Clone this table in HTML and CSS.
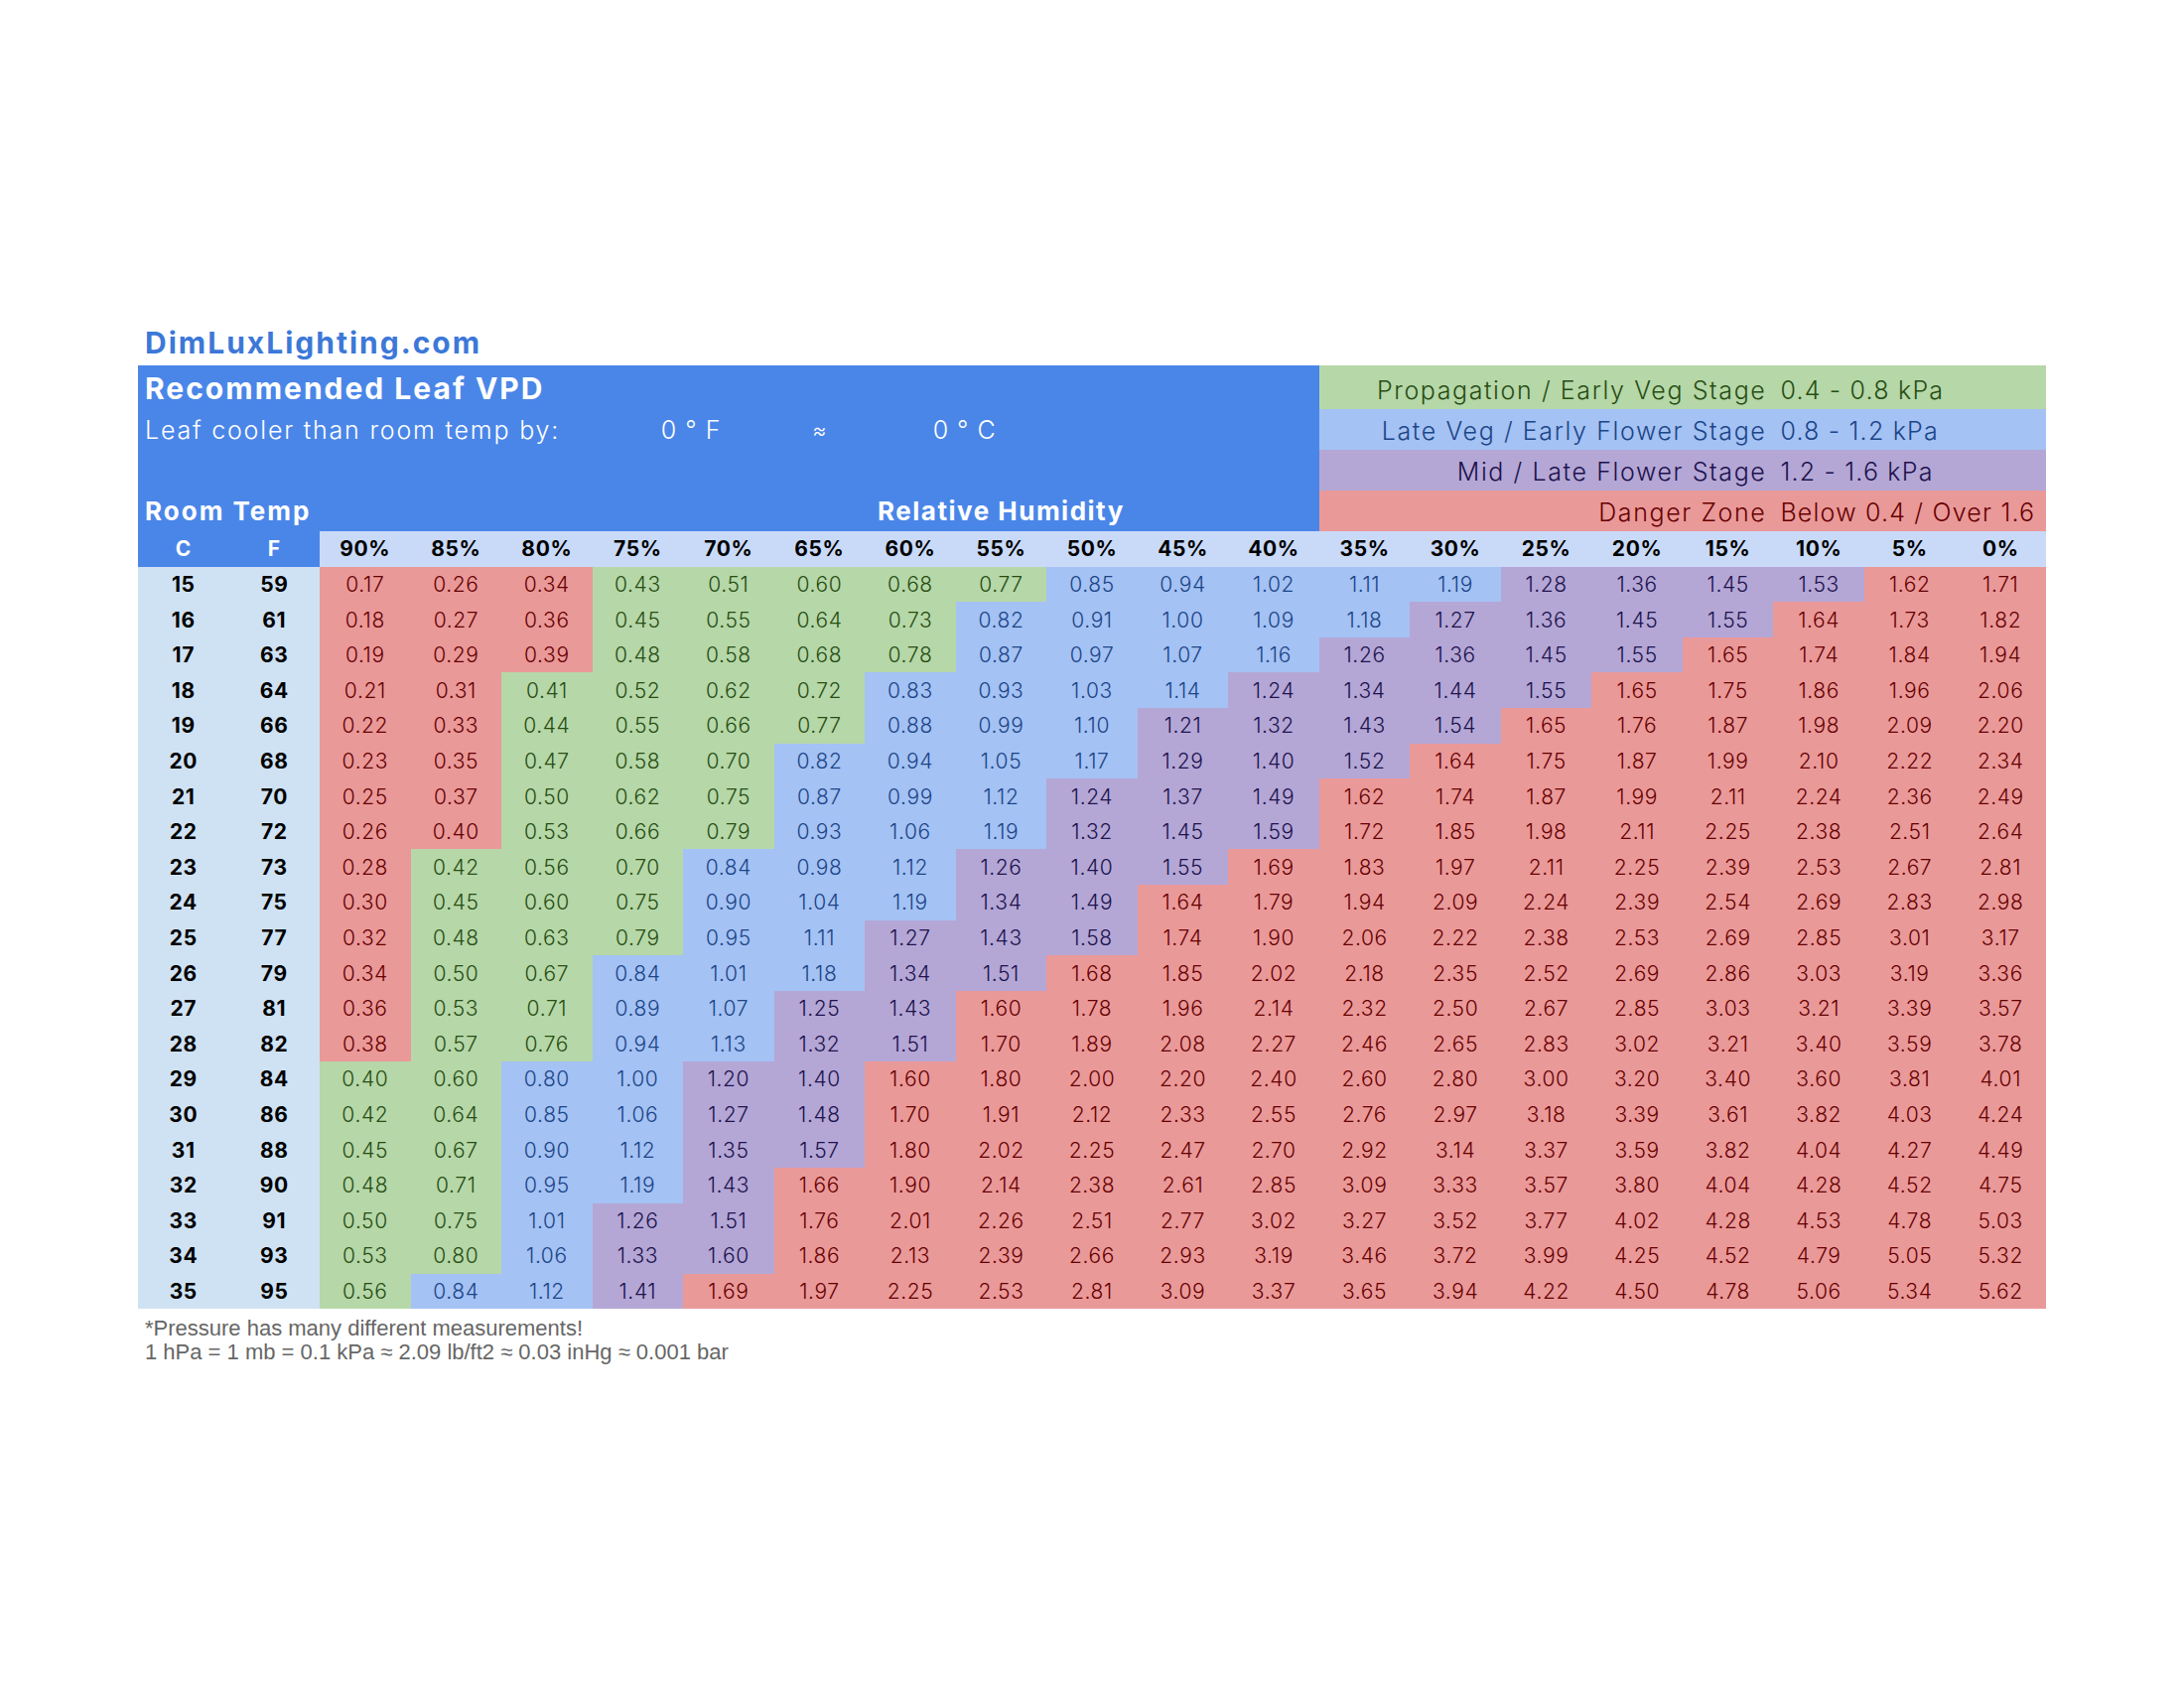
FILE: index.html
```html
<!DOCTYPE html>
<html lang="en">
<head>
<meta charset="utf-8">
<title>Recommended Leaf VPD</title>
<link rel="stylesheet" href="styles.css">
</head>
<body>
<div class="page">
  <div class="brand">DimLuxLighting.com</div>

  <div class="top">
    <div class="hblock">
      <div class="title">Recommended Leaf VPD</div>
      <div class="cool">Leaf cooler than room temp by:</div>
      <div class="degf">0 ° F</div>
      <div class="approx">≈</div>
      <div class="degc">0 ° C</div>
      <div class="roomtemp">Room Temp</div>
      <div class="rh">Relative Humidity</div>
    </div>
    <div class="lg lg-g"><span class="lg-name">Propagation / Early Veg Stage</span><span class="lg-val">0.4 - 0.8 kPa</span></div>
    <div class="lg lg-b"><span class="lg-name">Late Veg / Early Flower Stage</span><span class="lg-val">0.8 - 1.2 kPa</span></div>
    <div class="lg lg-p"><span class="lg-name">Mid / Late Flower Stage</span><span class="lg-val">1.2 - 1.6 kPa</span></div>
    <div class="lg lg-r"><span class="lg-name">Danger Zone</span><span class="lg-val">Below 0.4 / Over 1.6</span></div>
  </div>

  <div class="grid">
    <div class="hc">C</div><div class="hc">F</div>
    <div class="hp">90%</div><div class="hp">85%</div><div class="hp">80%</div><div class="hp">75%</div><div class="hp">70%</div><div class="hp">65%</div><div class="hp">60%</div><div class="hp">55%</div><div class="hp">50%</div><div class="hp">45%</div><div class="hp">40%</div><div class="hp">35%</div><div class="hp">30%</div><div class="hp">25%</div><div class="hp">20%</div><div class="hp">15%</div><div class="hp">10%</div><div class="hp">5%</div><div class="hp">0%</div>

    <div class="t">15</div><div class="t">59</div>
    <div>0.17</div><div>0.26</div><div>0.34</div><div class="g">0.43</div><div class="g">0.51</div><div class="g">0.60</div><div class="g">0.68</div><div class="g">0.77</div><div class="b">0.85</div><div class="b">0.94</div><div class="b">1.02</div><div class="b">1.11</div><div class="b">1.19</div><div class="p">1.28</div><div class="p">1.36</div><div class="p">1.45</div><div class="p">1.53</div><div>1.62</div><div>1.71</div>

    <div class="t">16</div><div class="t">61</div>
    <div>0.18</div><div>0.27</div><div>0.36</div><div class="g">0.45</div><div class="g">0.55</div><div class="g">0.64</div><div class="g">0.73</div><div class="b">0.82</div><div class="b">0.91</div><div class="b">1.00</div><div class="b">1.09</div><div class="b">1.18</div><div class="p">1.27</div><div class="p">1.36</div><div class="p">1.45</div><div class="p">1.55</div><div>1.64</div><div>1.73</div><div>1.82</div>

    <div class="t">17</div><div class="t">63</div>
    <div>0.19</div><div>0.29</div><div>0.39</div><div class="g">0.48</div><div class="g">0.58</div><div class="g">0.68</div><div class="g">0.78</div><div class="b">0.87</div><div class="b">0.97</div><div class="b">1.07</div><div class="b">1.16</div><div class="p">1.26</div><div class="p">1.36</div><div class="p">1.45</div><div class="p">1.55</div><div>1.65</div><div>1.74</div><div>1.84</div><div>1.94</div>

    <div class="t">18</div><div class="t">64</div>
    <div>0.21</div><div>0.31</div><div class="g">0.41</div><div class="g">0.52</div><div class="g">0.62</div><div class="g">0.72</div><div class="b">0.83</div><div class="b">0.93</div><div class="b">1.03</div><div class="b">1.14</div><div class="p">1.24</div><div class="p">1.34</div><div class="p">1.44</div><div class="p">1.55</div><div>1.65</div><div>1.75</div><div>1.86</div><div>1.96</div><div>2.06</div>

    <div class="t">19</div><div class="t">66</div>
    <div>0.22</div><div>0.33</div><div class="g">0.44</div><div class="g">0.55</div><div class="g">0.66</div><div class="g">0.77</div><div class="b">0.88</div><div class="b">0.99</div><div class="b">1.10</div><div class="p">1.21</div><div class="p">1.32</div><div class="p">1.43</div><div class="p">1.54</div><div>1.65</div><div>1.76</div><div>1.87</div><div>1.98</div><div>2.09</div><div>2.20</div>

    <div class="t">20</div><div class="t">68</div>
    <div>0.23</div><div>0.35</div><div class="g">0.47</div><div class="g">0.58</div><div class="g">0.70</div><div class="b">0.82</div><div class="b">0.94</div><div class="b">1.05</div><div class="b">1.17</div><div class="p">1.29</div><div class="p">1.40</div><div class="p">1.52</div><div>1.64</div><div>1.75</div><div>1.87</div><div>1.99</div><div>2.10</div><div>2.22</div><div>2.34</div>

    <div class="t">21</div><div class="t">70</div>
    <div>0.25</div><div>0.37</div><div class="g">0.50</div><div class="g">0.62</div><div class="g">0.75</div><div class="b">0.87</div><div class="b">0.99</div><div class="b">1.12</div><div class="p">1.24</div><div class="p">1.37</div><div class="p">1.49</div><div>1.62</div><div>1.74</div><div>1.87</div><div>1.99</div><div>2.11</div><div>2.24</div><div>2.36</div><div>2.49</div>

    <div class="t">22</div><div class="t">72</div>
    <div>0.26</div><div>0.40</div><div class="g">0.53</div><div class="g">0.66</div><div class="g">0.79</div><div class="b">0.93</div><div class="b">1.06</div><div class="b">1.19</div><div class="p">1.32</div><div class="p">1.45</div><div class="p">1.59</div><div>1.72</div><div>1.85</div><div>1.98</div><div>2.11</div><div>2.25</div><div>2.38</div><div>2.51</div><div>2.64</div>

    <div class="t">23</div><div class="t">73</div>
    <div>0.28</div><div class="g">0.42</div><div class="g">0.56</div><div class="g">0.70</div><div class="b">0.84</div><div class="b">0.98</div><div class="b">1.12</div><div class="p">1.26</div><div class="p">1.40</div><div class="p">1.55</div><div>1.69</div><div>1.83</div><div>1.97</div><div>2.11</div><div>2.25</div><div>2.39</div><div>2.53</div><div>2.67</div><div>2.81</div>

    <div class="t">24</div><div class="t">75</div>
    <div>0.30</div><div class="g">0.45</div><div class="g">0.60</div><div class="g">0.75</div><div class="b">0.90</div><div class="b">1.04</div><div class="b">1.19</div><div class="p">1.34</div><div class="p">1.49</div><div>1.64</div><div>1.79</div><div>1.94</div><div>2.09</div><div>2.24</div><div>2.39</div><div>2.54</div><div>2.69</div><div>2.83</div><div>2.98</div>

    <div class="t">25</div><div class="t">77</div>
    <div>0.32</div><div class="g">0.48</div><div class="g">0.63</div><div class="g">0.79</div><div class="b">0.95</div><div class="b">1.11</div><div class="p">1.27</div><div class="p">1.43</div><div class="p">1.58</div><div>1.74</div><div>1.90</div><div>2.06</div><div>2.22</div><div>2.38</div><div>2.53</div><div>2.69</div><div>2.85</div><div>3.01</div><div>3.17</div>

    <div class="t">26</div><div class="t">79</div>
    <div>0.34</div><div class="g">0.50</div><div class="g">0.67</div><div class="b">0.84</div><div class="b">1.01</div><div class="b">1.18</div><div class="p">1.34</div><div class="p">1.51</div><div>1.68</div><div>1.85</div><div>2.02</div><div>2.18</div><div>2.35</div><div>2.52</div><div>2.69</div><div>2.86</div><div>3.03</div><div>3.19</div><div>3.36</div>

    <div class="t">27</div><div class="t">81</div>
    <div>0.36</div><div class="g">0.53</div><div class="g">0.71</div><div class="b">0.89</div><div class="b">1.07</div><div class="p">1.25</div><div class="p">1.43</div><div>1.60</div><div>1.78</div><div>1.96</div><div>2.14</div><div>2.32</div><div>2.50</div><div>2.67</div><div>2.85</div><div>3.03</div><div>3.21</div><div>3.39</div><div>3.57</div>

    <div class="t">28</div><div class="t">82</div>
    <div>0.38</div><div class="g">0.57</div><div class="g">0.76</div><div class="b">0.94</div><div class="b">1.13</div><div class="p">1.32</div><div class="p">1.51</div><div>1.70</div><div>1.89</div><div>2.08</div><div>2.27</div><div>2.46</div><div>2.65</div><div>2.83</div><div>3.02</div><div>3.21</div><div>3.40</div><div>3.59</div><div>3.78</div>

    <div class="t">29</div><div class="t">84</div>
    <div class="g">0.40</div><div class="g">0.60</div><div class="b">0.80</div><div class="b">1.00</div><div class="p">1.20</div><div class="p">1.40</div><div>1.60</div><div>1.80</div><div>2.00</div><div>2.20</div><div>2.40</div><div>2.60</div><div>2.80</div><div>3.00</div><div>3.20</div><div>3.40</div><div>3.60</div><div>3.81</div><div>4.01</div>

    <div class="t">30</div><div class="t">86</div>
    <div class="g">0.42</div><div class="g">0.64</div><div class="b">0.85</div><div class="b">1.06</div><div class="p">1.27</div><div class="p">1.48</div><div>1.70</div><div>1.91</div><div>2.12</div><div>2.33</div><div>2.55</div><div>2.76</div><div>2.97</div><div>3.18</div><div>3.39</div><div>3.61</div><div>3.82</div><div>4.03</div><div>4.24</div>

    <div class="t">31</div><div class="t">88</div>
    <div class="g">0.45</div><div class="g">0.67</div><div class="b">0.90</div><div class="b">1.12</div><div class="p">1.35</div><div class="p">1.57</div><div>1.80</div><div>2.02</div><div>2.25</div><div>2.47</div><div>2.70</div><div>2.92</div><div>3.14</div><div>3.37</div><div>3.59</div><div>3.82</div><div>4.04</div><div>4.27</div><div>4.49</div>

    <div class="t">32</div><div class="t">90</div>
    <div class="g">0.48</div><div class="g">0.71</div><div class="b">0.95</div><div class="b">1.19</div><div class="p">1.43</div><div>1.66</div><div>1.90</div><div>2.14</div><div>2.38</div><div>2.61</div><div>2.85</div><div>3.09</div><div>3.33</div><div>3.57</div><div>3.80</div><div>4.04</div><div>4.28</div><div>4.52</div><div>4.75</div>

    <div class="t">33</div><div class="t">91</div>
    <div class="g">0.50</div><div class="g">0.75</div><div class="b">1.01</div><div class="p">1.26</div><div class="p">1.51</div><div>1.76</div><div>2.01</div><div>2.26</div><div>2.51</div><div>2.77</div><div>3.02</div><div>3.27</div><div>3.52</div><div>3.77</div><div>4.02</div><div>4.28</div><div>4.53</div><div>4.78</div><div>5.03</div>

    <div class="t">34</div><div class="t">93</div>
    <div class="g">0.53</div><div class="g">0.80</div><div class="b">1.06</div><div class="p">1.33</div><div class="p">1.60</div><div>1.86</div><div>2.13</div><div>2.39</div><div>2.66</div><div>2.93</div><div>3.19</div><div>3.46</div><div>3.72</div><div>3.99</div><div>4.25</div><div>4.52</div><div>4.79</div><div>5.05</div><div>5.32</div>

    <div class="t">35</div><div class="t">95</div>
    <div class="g">0.56</div><div class="b">0.84</div><div class="b">1.12</div><div class="p">1.41</div><div>1.69</div><div>1.97</div><div>2.25</div><div>2.53</div><div>2.81</div><div>3.09</div><div>3.37</div><div>3.65</div><div>3.94</div><div>4.22</div><div>4.50</div><div>4.78</div><div>5.06</div><div>5.34</div><div>5.62</div>
  </div>

  <div class="note">
    <p>*Pressure has many different measurements!</p>
    <p>1 hPa = 1 mb = 0.1 kPa ≈ 2.09 lb/ft2 ≈ 0.03 inHg ≈ 0.001 bar</p>
  </div>
</div>
</body>
</html>
```

FILE: styles.css
```css
html, body {
  margin: 0;
  padding: 0;
  background: #ffffff;
}

body {
  font-family: Inter, "Open Sans", "DejaVu Sans", sans-serif;
  color: #000;
}

.page {
  width: 1922px;
  margin: 0 auto;
  padding-top: 322px;
}

.brand {
  height: 46px;
  line-height: 46px;
  padding-left: 7px;
  font-size: 30px;
  font-weight: 700;
  color: #3c78d8;
  letter-spacing: 2px;
}

/* ---------- top block ---------- */
.top {
  display: grid;
  grid-template-columns: repeat(21, 1fr);
  grid-template-rows: 44px 41px 41px 41px;
}

.hblock {
  grid-column: 1 / 14;
  grid-row: 1 / 5;
  background: #4a86e8;
  color: #ffffff;
  display: grid;
  grid-template-columns: repeat(13, 1fr);
  grid-template-rows: 44px 41px 41px 41px;
  align-items: center;
}

.title {
  grid-column: 1 / 14;
  grid-row: 1;
  padding-left: 7px;
  padding-top: 2px;
  font-size: 30px;
  font-weight: 700;
  letter-spacing: 2px;
  white-space: nowrap;
}

.cool {
  grid-column: 1 / 6;
  grid-row: 2;
  padding-left: 7px;
  font-size: 25px;
  font-weight: 300;
  letter-spacing: 1.8px;
  white-space: nowrap;
}

.degf {
  grid-column: 6 / 8;
  grid-row: 2;
  text-align: center;
  padding-left: 16px;
  font-size: 25px;
  font-weight: 300;
  letter-spacing: 1px;
  white-space: nowrap;
}

.approx {
  grid-column: 8 / 9;
  grid-row: 2;
  text-align: center;
  font-size: 22px;
  font-weight: 300;
}

.degc {
  grid-column: 9 / 11;
  grid-row: 2;
  text-align: center;
  padding-left: 18px;
  font-size: 25px;
  font-weight: 300;
  letter-spacing: 1px;
  white-space: nowrap;
}

.roomtemp {
  grid-column: 1 / 4;
  grid-row: 4;
  padding-left: 7px;
  font-size: 26px;
  font-weight: 700;
  letter-spacing: 2px;
  white-space: nowrap;
}

.rh {
  grid-column: 7 / 14;
  grid-row: 4;
  text-align: center;
  font-size: 26px;
  font-weight: 700;
  letter-spacing: 1.5px;
  white-space: nowrap;
}

.lg {
  grid-column: 14 / 22;
  display: grid;
  grid-template-columns: 5fr 3fr;
  align-items: center;
  font-size: 25px;
  font-weight: 300;
  letter-spacing: 1.6px;
  white-space: nowrap;
}

.lg-name {
  text-align: right;
  padding-right: 7px;
}

.lg-val {
  padding-left: 7px;
  letter-spacing: 1.2px;
}

.lg-g { background: #b6d7a8; color: #274e13; padding-top: 6px; }
.lg-b { background: #a4c2f4; color: #1c4587; padding-top: 2px; }
.lg-p { background: #b4a7d6; color: #20124d; padding-top: 2px; }
.lg-r { background: #ea9999; color: #660000; padding-top: 2px; }

/* ---------- data grid ---------- */
.grid {
  display: grid;
  grid-template-columns: repeat(21, 1fr);
  grid-auto-rows: 35.62px;
}

.grid > div {
  display: flex;
  align-items: center;
  justify-content: center;
  font-size: 21px;
  font-weight: 300;
  letter-spacing: 0.6px;
  background: #ea9999;
  color: #660000;
}

.grid > .hc {
  background: #4a86e8;
  color: #ffffff;
  font-weight: 700;
}

.grid > .hp {
  background: #c9daf8;
  color: #000000;
  font-weight: 700;
}

.grid > .t {
  background: #cfe2f3;
  color: #000000;
  font-weight: 700;
}

.grid > .g { background: #b6d7a8; color: #274e13; }
.grid > .b { background: #a4c2f4; color: #1c4587; }
.grid > .p { background: #b4a7d6; color: #20124d; }

/* ---------- footnote ---------- */
.note {
  margin-top: 8px;
  padding-left: 7px;
  font-family: "Liberation Sans", Arial, sans-serif;
  font-size: 22px;
  line-height: 24px;
  color: #666666;
}

.note p {
  margin: 0;
}
```
